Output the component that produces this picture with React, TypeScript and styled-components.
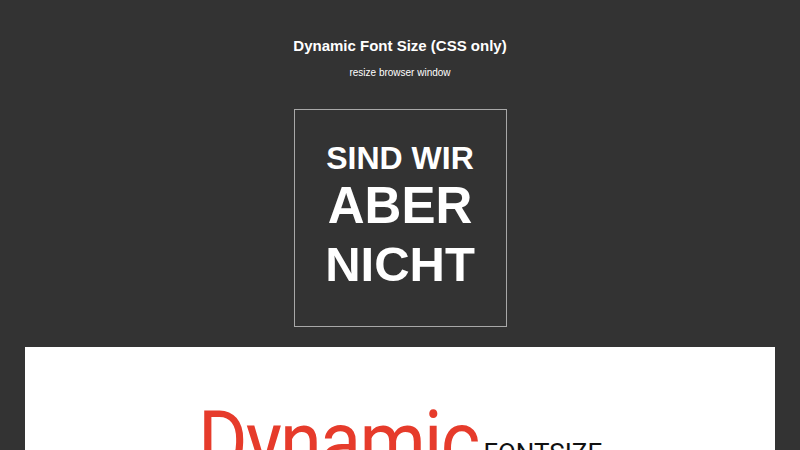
import styled, { createGlobalStyle } from 'styled-components';

const GlobalStyle = createGlobalStyle`
  html, body {
    margin: 0;
    padding: 0;
    background: #333333;
    font-family: "Liberation Sans", Arial, sans-serif;
    color: #ffffff;
    overflow: hidden;
  }
`;

const Page = styled.div`
  display: flex;
  flex-direction: column;
  align-items: center;
  padding-top: 37px;
`;

const Title = styled.h1`
  margin: 0;
  font-size: 15px;
  font-weight: bold;
  line-height: 18px;
`;

const Subtitle = styled.p`
  margin: 11px 0 0;
  font-size: 10px;
  line-height: 14px;
`;

const Box = styled.div`
  box-sizing: border-box;
  width: 213px;
  height: 218px;
  margin-top: 29px;
  border: 1px solid #a8a8a8;
  display: flex;
  flex-direction: column;
  align-items: center;
  justify-content: center;
  padding-bottom: 4px;
`;

const Line = styled.div<{ $size: number; $lh: number }>`
  font-weight: bold;
  font-size: ${(p) => p.$size}px;
  line-height: ${(p) => p.$lh}px;
  text-transform: uppercase;
`;

const Panel = styled.section`
  align-self: stretch;
  margin: 20px 25px 0;
  background: #ffffff;
  height: 300px;
  display: flex;
  justify-content: center;
  padding-top: 52px;
`;

const Headline = styled.div`
  display: flex;
  align-items: flex-start;
`;

/* condensed word: squeeze horizontally and give the lost width back */
const Big = styled.span`
  display: inline-block;
  font-family: Roboto, "Liberation Sans", sans-serif;
  font-size: 86px;
  line-height: 86px;
  color: #e63b2b;
  letter-spacing: -2px;
  transform: scaleX(0.88);
  transform-origin: left top;
  margin-right: -38px;
`;

const Small = styled.span`
  font-family: Roboto, "Liberation Sans", sans-serif;
  font-size: 26px;
  line-height: 26px;
  color: #111111;
  margin: 41px 0 0 5px;
`;

export default function App() {
  return (
    <>
      <GlobalStyle />
      <Page>
        <Title>Dynamic Font Size (CSS only)</Title>
        <Subtitle>resize browser window</Subtitle>
        <Box>
          <Line $size={32} $lh={38}>Sind wir</Line>
          <Line $size={51} $lh={58}>Aber</Line>
          <Line $size={49} $lh={58}>Nicht</Line>
        </Box>
        <Panel>
          <Headline>
            <Big>Dynamic</Big>
            <Small>FONTSIZE</Small>
          </Headline>
        </Panel>
      </Page>
    </>
  );
}
